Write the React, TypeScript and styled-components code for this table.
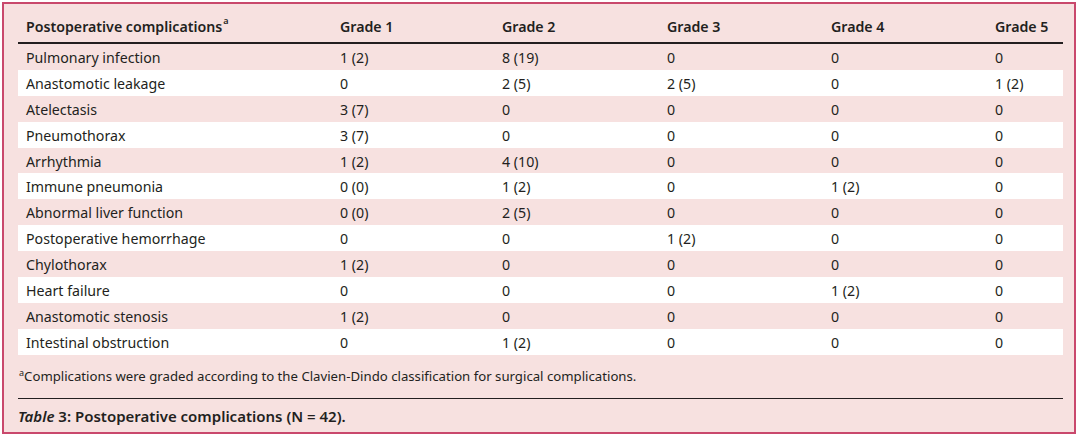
import React from "react";
import styled, { createGlobalStyle } from "styled-components";

const Global = createGlobalStyle`
  html, body { margin: 0; padding: 0; background: #ffffff; }
  body { font-family: "Noto Sans", "Open Sans", sans-serif; }
`;

const Frame = styled.div`
  box-sizing: border-box;
  width: 1074px;
  height: 432px;
  margin: 2px 0 0 2px;
  border: 2px solid #c9486c;
  background: #f7e1e0;
  padding: 6px 11px 0 14px;
  display: flex;
  flex-direction: column;
  color: #231f20;
  font-size: 14.2px;
`;

const cols = "314px 162px 165px 164px 164px 1fr";

const HeaderRow = styled.div`
  display: grid;
  grid-template-columns: ${cols};
  height: 32px;
  align-items: center;
  border-bottom: 2px solid #231f20;
  font-weight: 600;
`;

const Row = styled.div<{ $shade: boolean }>`
  display: grid;
  grid-template-columns: ${cols};
  height: 25.9px;
  align-items: center;
  padding-top: 1px;
  box-sizing: border-box;
  background: ${(p) => (p.$shade ? "#f7e1e0" : "#ffffff")};
`;

const Cell = styled.div`
  padding-left: 8px;
  white-space: nowrap;
`;

const Sup = styled.sup`
  font-size: 9px;
  vertical-align: top;
  position: relative;
  top: -3px;
  margin-left: 1px;
`;

const Footnote = styled.div`
  margin-top: 10px;
  font-size: 13.2px;
  height: 22px;
  line-height: 22px;
  white-space: nowrap;
`;

const Rule = styled.div`
  margin-top: 11px;
  border-top: 1.5px solid #231f20;
`;

const Caption = styled.div`
  margin-top: 6px;
  font-size: 15px;
  font-weight: 600;
  line-height: 22px;
  em { font-style: italic; }
`;

const rows: string[][] = [
  ["Pulmonary infection", "1 (2)", "8 (19)", "0", "0", "0"],
  ["Anastomotic leakage", "0", "2 (5)", "2 (5)", "0", "1 (2)"],
  ["Atelectasis", "3 (7)", "0", "0", "0", "0"],
  ["Pneumothorax", "3 (7)", "0", "0", "0", "0"],
  ["Arrhythmia", "1 (2)", "4 (10)", "0", "0", "0"],
  ["Immune pneumonia", "0 (0)", "1 (2)", "0", "1 (2)", "0"],
  ["Abnormal liver function", "0 (0)", "2 (5)", "0", "0", "0"],
  ["Postoperative hemorrhage", "0", "0", "1 (2)", "0", "0"],
  ["Chylothorax", "1 (2)", "0", "0", "0", "0"],
  ["Heart failure", "0", "0", "0", "1 (2)", "0"],
  ["Anastomotic stenosis", "1 (2)", "0", "0", "0", "0"],
  ["Intestinal obstruction", "0", "1 (2)", "0", "0", "0"],
];

export default function App() {
  return (
    <>
      <Global />
      <Frame>
        <HeaderRow>
          <Cell>
            Postoperative complications<Sup>a</Sup>
          </Cell>
          <Cell>Grade 1</Cell>
          <Cell>Grade 2</Cell>
          <Cell>Grade 3</Cell>
          <Cell>Grade 4</Cell>
          <Cell>Grade 5</Cell>
        </HeaderRow>
        {rows.map((r, i) => (
          <Row key={r[0]} $shade={i % 2 === 0}>
            {r.map((c, j) => (
              <Cell key={j}>{c}</Cell>
            ))}
          </Row>
        ))}
        <Footnote>
          <Sup>a</Sup>Complications were graded according to the Clavien-Dindo classification for surgical complications.
        </Footnote>
        <Rule />
        <Caption>
          <em>Table</em> 3: Postoperative complications (N = 42).
        </Caption>
      </Frame>
    </>
  );
}
